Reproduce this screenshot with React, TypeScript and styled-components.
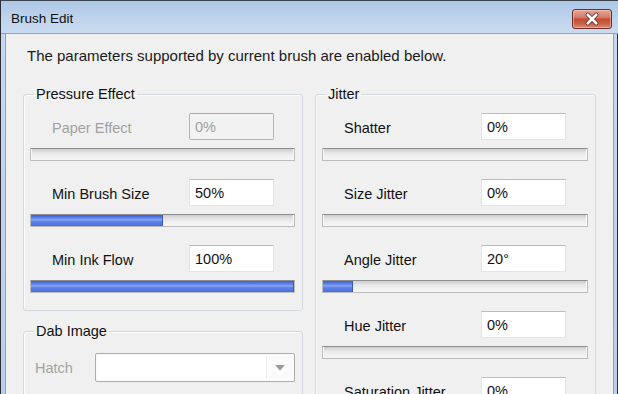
import React from "react";
import styled, { createGlobalStyle } from "styled-components";

const GlobalStyle = createGlobalStyle`
  html, body {
    margin: 0;
    padding: 0;
    background: #f0f0f0;
  }
  body {
    font-family: "Liberation Sans", Arial, sans-serif;
    color: #1a1a1a;
  }
`;

interface Param {
  label: string;
  value: string;
  fill: number;
  disabled?: boolean;
}

const pressureParams: Param[] = [
  { label: "Paper Effect", value: "0%", fill: 0, disabled: true },
  { label: "Min Brush Size", value: "50%", fill: 50 },
  { label: "Min Ink Flow", value: "100%", fill: 100 },
];

const jitterParams: Param[] = [
  { label: "Shatter", value: "0%", fill: 0 },
  { label: "Size Jitter", value: "0%", fill: 0 },
  { label: "Angle Jitter", value: "20°", fill: 11.3 },
  { label: "Hue Jitter", value: "0%", fill: 0 },
  { label: "Saturation Jitter", value: "0%", fill: 0 },
];

function CloseGlyph() {
  return (
    <svg width="40" height="20" viewBox="0 0 40 20">
      <path d="M15.5 5.5 L24.5 14.5 M24.5 5.5 L15.5 14.5" stroke="#6b2b1f" strokeWidth="4.6" strokeLinecap="round" fill="none" />
      <path d="M15.5 5.5 L24.5 14.5 M24.5 5.5 L15.5 14.5" stroke="#ffffff" strokeWidth="2.8" strokeLinecap="round" fill="none" />
    </svg>
  );
}

function ParamBlock({ param }: { param: Param }) {
  return (
    <ParamItem>
      <ParamRow>
        <ParamLabel $disabled={param.disabled}>{param.label}</ParamLabel>
        <ValueBox $disabled={param.disabled}>{param.value}</ValueBox>
      </ParamRow>
      <Track>
        {param.fill > 0 && <TrackFill style={{ width: `${param.fill}%` }} />}
      </Track>
    </ParamItem>
  );
}

export default function App() {
  return (
    <>
      <GlobalStyle />
      <Window>
        <TitleBar>
          <Title>Brush Edit</Title>
          <CloseButton>
            <CloseGlyph />
          </CloseButton>
        </TitleBar>
        <Body>
          <FrameEdge $side="left" />
          <Client>
            <Intro>The parameters supported by current brush are enabled below.</Intro>
            <Columns>
              <Column>
                <Group>
                  <Caption>Pressure Effect</Caption>
                  <GroupBody>
                    {pressureParams.map((p) => (
                      <ParamBlock key={p.label} param={p} />
                    ))}
                  </GroupBody>
                </Group>
                <Group $spaced>
                  <Caption>Dab Image</Caption>
                  <DabBody>
                    <ComboLabel>Hatch</ComboLabel>
                    <Combo>
                      <ComboField />
                      <ComboArrow>
                        <svg width="10" height="6" viewBox="0 0 10 6">
                          <path d="M0 0 L10 0 L5 5.5 Z" fill="#9a9a9a" />
                        </svg>
                      </ComboArrow>
                    </Combo>
                  </DabBody>
                </Group>
              </Column>
              <Column $wide>
                <Group>
                  <Caption>Jitter</Caption>
                  <GroupBody>
                    {jitterParams.map((p) => (
                      <ParamBlock key={p.label} param={p} />
                    ))}
                  </GroupBody>
                </Group>
              </Column>
            </Columns>
          </Client>
          <FrameEdge $side="right" />
        </Body>
      </Window>
    </>
  );
}

const Window = styled.div`
  width: 618px;
  height: 394px;
  overflow: hidden;
  display: flex;
  flex-direction: column;
  box-sizing: border-box;
  border-top: 1px solid #3c4550;
  border-left: 1px solid #2b2f35;
  background: #c3d6ed;
`;

const TitleBar = styled.div`
  height: 32px;
  flex: none;
  display: flex;
  align-items: flex-start;
  justify-content: space-between;
  padding: 0 6px 0 10px;
  background: linear-gradient(to bottom, #adc7e6 0%, #bfd4ed 55%, #c8dbf0 100%);
  border-bottom: 1px solid #8da3bd;
`;

const Title = styled.div`
  font-size: 13.5px;
  line-height: 16px;
  margin-top: 10px;
  color: #111;
`;

const CloseButton = styled.div`
  width: 40px;
  height: 20px;
  margin-top: 8px;
  box-sizing: border-box;
  border: 1px solid #6e2c22;
  border-radius: 3px;
  display: flex;
  align-items: center;
  justify-content: center;
  background: linear-gradient(
    to bottom,
    #e6a596 0%,
    #d67d68 40%,
    #c24e33 52%,
    #c9604a 75%,
    #dc8a72 100%
  );
  box-shadow: inset 0 0 0 1px rgba(255, 220, 210, 0.45);
`;

const Body = styled.div`
  flex: 1;
  display: flex;
  min-height: 0;
`;

const FrameEdge = styled.div<{ $side: "left" | "right" }>`
  flex: none;
  width: ${(p) => (p.$side === "left" ? "4px" : "3px")};
  background: linear-gradient(to bottom, #c6d8ee, #b9cfe9);
  ${(p) =>
    p.$side === "left"
      ? "border-right: 1px solid #8ea3bc;"
      : "border-left: 1px solid #8ea3bc; border-right: 1px solid #2b2f35;"}
`;

const Client = styled.div`
  flex: 1;
  background: #f0f0f0;
  padding: 14px 0 0 17px;
  overflow: hidden;
`;

const Intro = styled.div`
  font-size: 15px;
  line-height: 16px;
  margin-left: 4px;
`;

const Columns = styled.div`
  display: flex;
  gap: 12px;
  margin-top: 22px;
  align-items: flex-start;
`;

const Column = styled.div<{ $wide?: boolean }>`
  width: ${(p) => (p.$wide ? "281px" : "280px")};
  display: flex;
  flex-direction: column;
`;

const Group = styled.fieldset<{ $spaced?: boolean }>`
  margin: ${(p) => (p.$spaced ? "12px 0 0 0" : "0")};
  padding: 0;
  min-width: 0;
  border: 1px solid #d3d9de;
  border-radius: 3px;
  box-shadow: inset 1px 1px 0 #fbfbfb;
`;

const Caption = styled.legend`
  margin-left: 10px;
  padding: 0 2px;
  font-size: 14.5px;
  line-height: 16px;
  color: #111;
`;

const GroupBody = styled.div`
  padding: 11px 7px 17px 6px;
  display: flex;
  flex-direction: column;
  gap: 18px;
`;

const ParamItem = styled.div`
  display: flex;
  flex-direction: column;
  gap: 8px;
`;

const ParamRow = styled.div`
  display: flex;
  align-items: center;
  height: 27px;
`;

const ParamLabel = styled.div<{ $disabled?: boolean }>`
  width: 159px;
  box-sizing: border-box;
  padding-left: 22px;
  padding-top: 2px;
  font-size: 14.5px;
  line-height: 16px;
  color: ${(p) => (p.$disabled ? "#a2a2a2" : "#111")};
`;

const ValueBox = styled.div<{ $disabled?: boolean }>`
  width: 85px;
  height: 27px;
  box-sizing: border-box;
  padding: 0 5px;
  display: flex;
  align-items: center;
  font-size: 14.5px;
  color: ${(p) => (p.$disabled ? "#a0a0a0" : "#111")};
  background: ${(p) => (p.$disabled ? "#f2f2f2" : "#ffffff")};
  border: 1px solid ${(p) => (p.$disabled ? "#b5b5b5" : "#e2e4ea")};
  border-top-color: ${(p) => (p.$disabled ? "#a8a8a8" : "#b9bbc1")};
  border-radius: ${(p) => (p.$disabled ? "2px" : "0")};
`;

const Track = styled.div`
  height: 13px;
  box-sizing: border-box;
  border: 1px solid #bcbcbc;
  border-top-color: #8e8e8e;
  border-radius: 1px;
  background: linear-gradient(to bottom, #cdcdcd 0%, #e6e6e6 35%, #f1f1f1 70%, #f6f6f6 100%);
  box-shadow: inset 1px 0 0 #fafafa, inset -1px 0 0 #fafafa;
  overflow: hidden;
`;

const TrackFill = styled.div`
  height: 100%;
  background: linear-gradient(
    to bottom,
    #3a5fd3 0%,
    #5b7fe6 25%,
    #8aa6f2 45%,
    #5f82e8 60%,
    #4a6fe0 100%
  );
  box-shadow: inset -1px 0 0 #3a58c4;
`;

const DabBody = styled.div`
  display: flex;
  align-items: center;
  padding: 14px 7px 20px 11px;
`;

const ComboLabel = styled.div`
  width: 60px;
  font-size: 14.5px;
  line-height: 16px;
  color: #a3a3a3;
`;

const Combo = styled.div`
  width: 200px;
  height: 29px;
  box-sizing: border-box;
  border: 1px solid #adadad;
  border-radius: 2px;
  background: #fbfbfb;
  display: flex;
  padding: 2px;
`;

const ComboField = styled.div`
  flex: 1;
  border-right: 1px solid #eaeaea;
  background: #ffffff;
`;

const ComboArrow = styled.div`
  width: 25px;
  display: flex;
  align-items: center;
  justify-content: center;
`;
